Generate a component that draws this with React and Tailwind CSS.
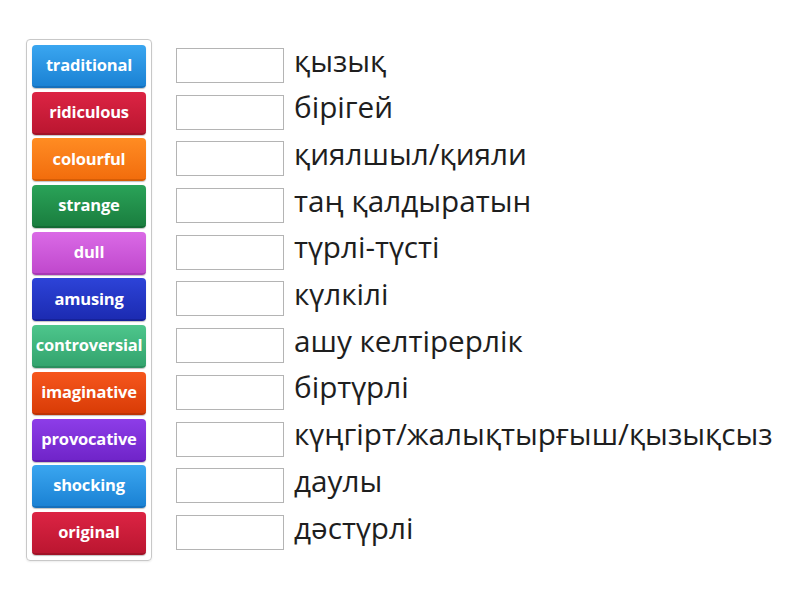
const TILES = [
  { label: 'traditional',   cls: 'from-[#3aa6f0] to-[#1a82d4] border-[#1670bb]' },
  { label: 'ridiculous',    cls: 'from-[#dc2444] to-[#bb1630] border-[#a01227]' },
  { label: 'colourful',     cls: 'from-[#ff8c22] to-[#f26d0c] border-[#d65d06]' },
  { label: 'strange',       cls: 'from-[#2aa358] to-[#1a7e3f] border-[#146a34]' },
  { label: 'dull',          cls: 'from-[#da6ae6] to-[#c048cd] border-[#a838b5]' },
  { label: 'amusing',       cls: 'from-[#2d43d8] to-[#1c2bb2] border-[#16229a]' },
  { label: 'controversial', cls: 'from-[#4dc68c] to-[#33a46e] border-[#2a8f5e]' },
  { label: 'imaginative',   cls: 'from-[#f6561c] to-[#d93c06] border-[#be3304]' },
  { label: 'provocative',   cls: 'from-[#8d3de8] to-[#7024c9] border-[#5f1db0]' },
  { label: 'shocking',      cls: 'from-[#3aa6f0] to-[#1a82d4] border-[#1670bb]' },
  { label: 'original',      cls: 'from-[#dc2444] to-[#bb1630] border-[#a01227]' },
]

const WORDS = [
  'қызық',
  'бірігей',
  'қиялшыл/қияли',
  'таң қалдыратын',
  'түрлі-түсті',
  'күлкілі',
  'ашу келтірерлік',
  'біртүрлі',
  'күңгірт/жалықтырғыш/қызықсыз',
  'даулы',
  'дәстүрлі',
]

export default function App() {
  return (
    <div className="w-[800px] h-[600px] bg-white flex items-start pt-[39px] pl-[26px] font-['Open_Sans',_'DejaVu_Sans',_sans-serif]">
      <div className="w-[126px] border border-[#c8c8c8] rounded-[4px] px-[5px] pt-[5px] pb-[5px] flex flex-col gap-[3.7px] shadow-[0_1px_2px_rgba(0,0,0,0.08)]">
        {TILES.map((t) => (
          <div
            key={t.label}
            className={`h-[43px] rounded-[4px] bg-gradient-to-b border-b-2 ${t.cls} flex items-center justify-center text-white font-bold text-[16.5px] tracking-[-0.2px] whitespace-nowrap shadow-[0_1px_1px_rgba(0,0,0,0.25)]`}
          >
            {t.label}
          </div>
        ))}
      </div>

      <div className="ml-[24px] pt-[9px] flex flex-col gap-[11.7px]">
        {WORDS.map((w) => (
          <div key={w} className="h-[35px] flex items-center">
            <div className="w-[108px] h-[35px] border border-[#b4b4b4] bg-white shrink-0" />
            <span className="ml-[10px] text-[29.7px] leading-none text-[#1e1e1e] whitespace-nowrap -translate-y-[5px]">{w}</span>
          </div>
        ))}
      </div>
    </div>
  )
}
